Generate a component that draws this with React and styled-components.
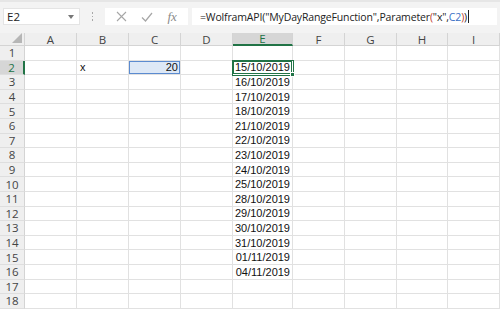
import React from 'react'
import styled, { createGlobalStyle } from 'styled-components'

const Global = createGlobalStyle`
  html, body {
    margin: 0;
    padding: 0;
    background: #ffffff;
    overflow: hidden;
  }
  body {
    font-family: "Liberation Sans", Arial, sans-serif;
  }
`

const Window = styled.div`
  width: 500px;
  height: 312px;
  display: flex;
  flex-direction: column;
  overflow: hidden;
`

const Toolbar = styled.div`
  height: 33px;
  flex: none;
  background: #f3f3f3;
  border-top: 2px solid #e6e6e6;
  box-sizing: border-box;
  display: flex;
  align-items: flex-start;
  padding: 6px 3px 0 3px;
`

const NameBox = styled.div`
  width: 77px;
  height: 17px;
  background: #fff;
  border: 1px solid #e4e4e4;
  box-sizing: border-box;
  display: flex;
  align-items: center;
  justify-content: space-between;
  padding: 0 4px 0 3px;
  font-family: "Open Sans", "Noto Sans", sans-serif;
  font-size: 11.5px;
  color: #222;
`

const Caret = styled.span`
  width: 0;
  height: 0;
  border-left: 3.5px solid transparent;
  border-right: 3.5px solid transparent;
  border-top: 4px solid #777;
  margin-right: 1px;
`

const Grip = styled.div`
  width: 25px;
  height: 17px;
  display: flex;
  flex-direction: column;
  align-items: center;
  justify-content: center;
  gap: 2px;
  & span {
    width: 1.5px;
    height: 1.5px;
    background: #a8a8a8;
  }
`

const Buttons = styled.div`
  width: 83px;
  height: 17px;
  background: #fff;
  display: flex;
  align-items: center;
  justify-content: space-around;
  padding: 0 4px;
  box-sizing: border-box;
`

const Fx = styled.span`
  font-family: "Liberation Serif", "Times New Roman", serif;
  font-style: italic;
  font-size: 13px;
  color: #8a8a8a;
`

const Formula = styled.div`
  flex: 1;
  margin-left: 4px;
  height: 17px;
  background: #fff;
  display: flex;
  align-items: center;
  padding-left: 8px;
  font-family: "Open Sans", "Noto Sans", sans-serif;
  font-size: 10.5px;
  letter-spacing: -0.15px;
  color: #222;
  white-space: nowrap;
`

const Tok = styled.span`
  color: ${p => p.$c || '#222'};
`

const Cursor = styled.span`
  display: inline-block;
  width: 1px;
  height: 13px;
  background: #222;
  margin-left: 1px;
`

const Sheet = styled.div`
  display: grid;
  grid-template-columns: 25px 52px 52px 52px 52px 60px 52px 52px 51px 52px;
  grid-template-rows: 13px;
  grid-auto-rows: 14.6px;
  font-size: 11px;
  color: #111;
`

const Corner = styled.div`
  background: #efefef;
  border-right: 1px solid #d4d4d4;
  border-bottom: 1px solid #d4d4d4;
  position: relative;
  box-sizing: border-box;
  &::after {
    content: '';
    position: absolute;
    right: 2px;
    bottom: 2px;
    width: 0;
    height: 0;
    border-left: 10px solid transparent;
    border-bottom: 10px solid #b6b6b6;
  }
`

const ColHead = styled.div`
  background: ${p => (p.$sel ? '#d6d6d6' : '#efefef')};
  color: ${p => (p.$sel ? '#217346' : '#444')};
  border-right: 1px solid #d4d4d4;
  border-bottom: ${p => (p.$sel ? '2px solid #217346' : '1px solid #d4d4d4')};
  box-sizing: border-box;
  display: flex;
  align-items: center;
  justify-content: center;
  font-family: "Open Sans", "Noto Sans", sans-serif;
  font-size: 11.5px;
`

const RowHead = styled.div`
  background: ${p => (p.$sel ? '#d6d6d6' : '#efefef')};
  color: ${p => (p.$sel ? '#217346' : '#444')};
  border-right: ${p => (p.$sel ? '2px solid #217346' : '1px solid #d4d4d4')};
  border-bottom: 1px solid #dedede;
  box-sizing: border-box;
  display: flex;
  align-items: center;
  justify-content: center;
  font-family: "Open Sans", "Noto Sans", sans-serif;
  font-size: 11.5px;
`

const Cell = styled.div`
  position: relative;
  box-sizing: border-box;
  border-right: 1px solid #e1e1e1;
  border-bottom: 1px solid #e1e1e1;
  display: flex;
  align-items: center;
  justify-content: ${p => (p.$right ? 'flex-end' : 'flex-start')};
  padding: 0 2px 0 3px;
  white-space: nowrap;
  background: ${p => (p.$ref ? '#dde8f6' : '#fff')};
  ${p => p.$ref && 'box-shadow: inset 0 0 0 1px #5b8bd0;'}
  ${p =>
    p.$active &&
    'z-index: 1; border-color: transparent; box-shadow: 0 0 0 1px #217346, inset 0 0 0 1px #217346;'}
`

const Handle = styled.span`
  position: absolute;
  right: -3px;
  bottom: -3px;
  width: 5px;
  height: 5px;
  background: #217346;
  border: 1px solid #fff;
  box-sizing: border-box;
  z-index: 2;
`

const cols = ['A', 'B', 'C', 'D', 'E', 'F', 'G', 'H', 'I']

const dates = [
  '15/10/2019', '16/10/2019', '17/10/2019', '18/10/2019', '21/10/2019',
  '22/10/2019', '23/10/2019', '24/10/2019', '25/10/2019', '28/10/2019',
  '29/10/2019', '30/10/2019', '31/10/2019', '01/11/2019', '04/11/2019',
]

const cellValue = (row, col) => {
  if (row === 2 && col === 'B') return 'x'
  if (row === 2 && col === 'C') return '20'
  if (col === 'E' && row >= 2 && row <= 16) return dates[row - 2]
  return ''
}

const X = () => (
  <svg width="11" height="11" viewBox="0 0 11 11">
    <path d="M1 1 L10 10 M10 1 L1 10" stroke="#a6a6a6" strokeWidth="1.1" fill="none" />
  </svg>
)

const Check = () => (
  <svg width="12" height="10" viewBox="0 0 12 10">
    <path d="M1 5.5 L4.5 9 L11 1" stroke="#a6a6a6" strokeWidth="1.2" fill="none" />
  </svg>
)

export default function App() {
  const rows = Array.from({ length: 18 }, (_, i) => i + 1)
  return (
    <Window>
      <Global />
      <Toolbar>
        <NameBox>
          E2
          <Caret />
        </NameBox>
        <Grip>
          <span />
          <span />
          <span />
        </Grip>
        <Buttons>
          <X />
          <Check />
          <Fx>fx</Fx>
        </Buttons>
        <Formula>
          <Tok>=WolframAPI("MyDayRangeFunction",Parameter</Tok>
          <Tok $c="#c0392b">(</Tok>
          <Tok>"x",</Tok>
          <Tok $c="#3a6fc4">C2</Tok>
          <Tok $c="#c0392b">)</Tok>
          <Tok>)</Tok>
          <Cursor />
        </Formula>
      </Toolbar>
      <Sheet>
        <Corner />
        {cols.map(c => (
          <ColHead key={c} $sel={c === 'E'}>
            {c}
          </ColHead>
        ))}
        {rows.map(r => (
          <React.Fragment key={r}>
            <RowHead $sel={r === 2}>{r}</RowHead>
            {cols.map(c => (
              <Cell
                key={c}
                $right={(r === 2 && c === 'C') || c === 'E'}
                $ref={r === 2 && c === 'C'}
                $active={r === 2 && c === 'E'}
              >
                {cellValue(r, c)}
                {r === 2 && c === 'E' && <Handle />}
              </Cell>
            ))}
          </React.Fragment>
        ))}
      </Sheet>
    </Window>
  )
}
